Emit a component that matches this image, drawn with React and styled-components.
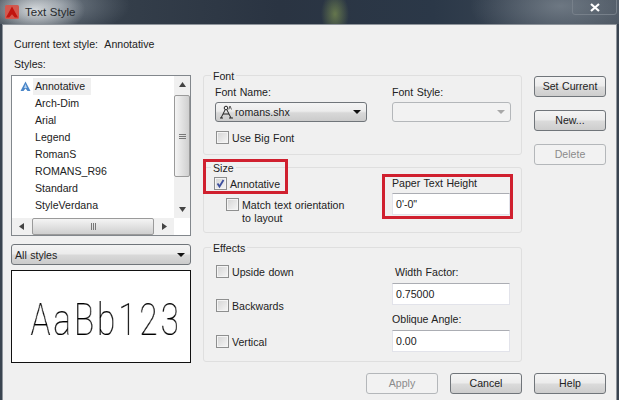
import styled, { createGlobalStyle } from 'styled-components';

const GlobalStyle = createGlobalStyle`
	html, body {
		margin: 0;
		padding: 0;
		background: #2b3644;
	}

	body {
		font-family: 'Liberation Sans', Arial, sans-serif;
		font-size: 10.6px;
		word-spacing: 0.5px;
		color: #222;
	}
`;

const Frame = styled.div`
	width: 619px;
	height: 400px;
	overflow: hidden;
	display: flex;
	flex-direction: column;
	background: #3a4450;
`;

const TitleBar = styled.div`
	flex: none;
	height: 24px;
	display: flex;
	align-items: center;
	gap: 6px;
	padding-left: 5px;
	position: relative;
	background:
		radial-gradient(ellipse 50px 26px at 35px 10px, rgba(235, 238, 240, 0.85), rgba(235, 238, 240, 0) 100%),
		radial-gradient(ellipse 70px 30px at 60px 5px, rgba(150, 160, 170, 0.6), rgba(150, 160, 170, 0) 100%),
		radial-gradient(ellipse 14px 22px at 335px 14px, rgba(120, 140, 80, 0.75), rgba(120, 140, 80, 0) 100%),
		radial-gradient(ellipse 90px 40px at 560px 6px, rgba(130, 140, 150, 0.7), rgba(130, 140, 150, 0) 100%),
		linear-gradient(90deg, #3c4650 0%, #2a3442 45%, #2b3848 70%, #46505c 100%);
`;

const Title = styled.span`
	font-size: 11.5px;
	color: #26292c;
`;

const CloseButton = styled.div`
	position: absolute;
	top: -1px;
	right: 2px;
	width: 45px;
	height: 16px;
	box-sizing: border-box;
	display: flex;
	align-items: center;
	justify-content: center;
	border: 1px solid #77808a;
	border-radius: 0 0 3px 3px;
`;

const Client = styled.div`
	flex: 1;
	position: relative;
	margin: 0 2px 0 2px;
	padding-left: 8px;
	border: 1px solid #8f959c;
	border-bottom: 0;
	background: #f0f0f0;
	display: flex;
	flex-direction: column;
`;

const Header = styled.div`
	flex: none;
	height: 50px;
	padding: 11px 0 0 3px;
	box-sizing: border-box;
	line-height: 16px;
`;

const Line = styled.div`
	height: 16px;
	margin-bottom: 4px;
	white-space: pre;
`;

const Body = styled.div`
	display: grid;
	grid-template-columns: 180px 319px 72px;
	column-gap: 12px;
	height: 288px;
`;

const Column = styled.div`
	display: flex;
	flex-direction: column;
	min-width: 0;
`;

const StyleList = styled.div`
	height: 161px;
	box-sizing: border-box;
	border: 1px solid #82878c;
	background: #fff;
	display: grid;
	grid-template-columns: 1fr 16px;
	grid-template-rows: 142px 17px;
`;

const Rows = styled.div`
	padding: 2px 0 0 8px;
`;

const Row = styled.div`
	display: flex;
	align-items: center;
	height: 17px;
`;

const RowIcon = styled.span`
	width: 13px;
	flex: none;
	display: flex;
`;

const RowText = styled.span`
	padding: 0 6px 0 2px;
	line-height: 17px;
	background: ${(p) => (p.$selected ? '#f0f0f0' : 'transparent')};
`;

const VScroll = styled.div`
	display: flex;
	flex-direction: column;
	align-items: center;
	background: #f0f0f0;
	justify-content: space-between;
	padding: 6px 0 6px;
	box-sizing: border-box;
	position: relative;
`;

const VThumb = styled.div`
	position: absolute;
	left: 0;
	top: 19px;
	width: 16px;
	height: 82px;
	box-sizing: border-box;
	border: 1px solid #9a9a9a;
	border-radius: 2px;
	background: linear-gradient(90deg, #f4f4f4, #cfcfcf);
	display: flex;
	flex-direction: column;
	align-items: center;
	justify-content: center;
	gap: 1px;
`;

const HScroll = styled.div`
	position: relative;
	display: flex;
	align-items: center;
	justify-content: space-between;
	padding: 0 7px;
	background: #f0f0f0;
`;

const HThumb = styled.div`
	position: absolute;
	left: 20px;
	top: 0;
	width: 122px;
	height: 17px;
	box-sizing: border-box;
	border: 1px solid #9a9a9a;
	border-radius: 2px;
	background: linear-gradient(#f4f4f4, #cfcfcf);
	display: flex;
	align-items: center;
	justify-content: center;
	gap: 1px;
`;

const Grip = styled.i`
	display: block;
	background: #777;
	width: ${(p) => (p.$vertical ? '1px' : '7px')};
	height: ${(p) => (p.$vertical ? '7px' : '1px')};
`;

const Select = styled.div`
	height: ${(p) => p.$height || 20}px;
	width: ${(p) => p.$width || 180}px;
	margin-top: ${(p) => p.$top || 0}px;
	box-sizing: border-box;
	border: 1px solid ${(p) => (p.$disabled ? '#b4b7ba' : '#70757a')};
	border-radius: 3px;
	background: ${(p) => (p.$disabled ? '#f2f2f2' : 'linear-gradient(#f4f4f4 0%, #ececec 45%, #d8d8d8 55%, #cbcbcb 100%)')};
	display: flex;
	align-items: center;
	gap: 1px;
	padding: 0 5px 0 3px;
`;

const SelectText = styled.span`
	flex: 1;
`;

const Caret = styled.span`
	width: 0;
	height: 0;
	border-left: 4px solid transparent;
	border-right: 4px solid transparent;
	border-top: 4px solid ${(p) => (p.$disabled ? '#a8a8a8' : '#111')};
`;

const Preview = styled.div`
	height: 93px;
	margin-top: 5px;
	box-sizing: border-box;
	border: 1px solid #111;
	background: #fff;
	display: flex;
	align-items: center;
	justify-content: center;
	overflow: hidden;
`;

const PreviewText = styled.span`
	display: inline-block;
	font-family: Roboto, 'Liberation Sans', sans-serif;
	font-weight: 100;
	font-size: 45px;
	letter-spacing: 4px;
	line-height: 1;
	color: #000;
	margin: 6px 0 0 10px;
	white-space: nowrap;
	transform: scaleX(0.74);
	will-change: transform;
	-webkit-text-stroke: 0.2px #000;
`;

const Group = styled.div`
	flex: none;
	height: ${(p) => p.$height}px;
	margin-top: ${(p) => p.$top || 0}px;
	box-sizing: border-box;
	border: 1px solid #dfdfdf;
	border-radius: 3px;
	padding: 0 10px 0 11px;
`;

const Legend = styled.div`
	margin: -8px 0 0 -4px;
	width: fit-content;
	height: 16px;
	line-height: 16px;
	padding: 0 2px;
	background: #f0f0f0;
`;

const Columns = styled.div`
	display: grid;
	grid-template-columns: ${(p) => p.$left}px 1fr;
`;

const Label = styled.div`
	height: 16px;
	line-height: 16px;
	margin-top: ${(p) => p.$top || 0}px;
	margin-left: ${(p) => p.$left || 0}px;
`;

const CheckRow = styled.div`
	display: flex;
	align-items: flex-start;
	gap: 3px;
	line-height: 13px;
	margin-top: ${(p) => p.$top || 0}px;
	margin-left: ${(p) => p.$left || 0}px;
`;

const CheckText = styled.span`
	line-height: 13px;
	padding-top: 1px;
`;

const Box = styled.span`
	flex: none;
	width: 13px;
	height: 13px;
	box-sizing: border-box;
	border: 1px solid #8e8f8f;
	background: linear-gradient(135deg, #d4d4d4, #f6f6f6);
	box-shadow: inset 0 0 0 1px #f4f4f4;
	display: flex;
	align-items: center;
	justify-content: center;
`;

const TextField = styled.div`
	height: 22px;
	width: ${(p) => p.$width || 118}px;
	margin-top: ${(p) => p.$top || 0}px;
	box-sizing: border-box;
	border: 1px solid #e2e3ea;
	border-top-color: #abadb3;
	background: #fff;
	padding-left: 3px;
	line-height: 20px;
`;

const ButtonStack = styled.div`
	display: flex;
	flex-direction: column;
	gap: 13px;
	padding-top: 1px;
`;

const Button = styled.div`
	width: 72px;
	height: 21px;
	box-sizing: border-box;
	border: 1px solid ${(p) => (p.$disabled ? '#b4b7ba' : '#70757a')};
	border-radius: 3px;
	background: ${(p) => (p.$disabled ? '#f2f2f2' : 'linear-gradient(#f4f4f4 0%, #ececec 45%, #dadada 55%, #cdcdcd 100%)')};
	color: ${(p) => (p.$disabled ? '#8b8b8b' : '#222')};
	text-align: center;
	line-height: 19px;
`;

const Footer = styled.div`
	display: flex;
	justify-content: flex-end;
	gap: 12px;
	padding: 10px 10px 0 0;
`;

const RedBox = styled.div`
	position: absolute;
	left: ${(p) => p.$x}px;
	top: ${(p) => p.$y}px;
	width: ${(p) => p.$w}px;
	height: ${(p) => p.$h}px;
	box-sizing: border-box;
	border: 3px solid #d0202f;
	pointer-events: none;
`;

const AppIcon = () => (
	<svg width='14' height='14' viewBox='0 0 14 14'>
		<rect width='14' height='14' rx='1.5' fill='#d2584e' />
		<path d='M7 1.5 L13 12.5 H9.8 L7 9.2 L4.2 12.5 H1 Z' fill='#c2140f' />
	</svg>
);

const CloseIcon = () => (
	<svg width='10' height='9' viewBox='0 0 10 9'>
		<path d='M1 1 L9 8 M9 1 L1 8' stroke='#fff' strokeWidth='2.2' />
	</svg>
);

const AnnotativeIcon = () => (
	<svg width='11' height='11' viewBox='0 0 11 11'>
		<path d='M5.5 0.5 L10.5 10 H7.5 L5.5 7.5 L3.5 10 H0.5 Z' fill='#4a86c8' />
		<path d='M5.5 3 L7 7 H4 Z' fill='#b9d3ee' />
	</svg>
);

const ShxIcon = () => (
	<svg width='15' height='15' viewBox='0 0 15 15' fill='none' stroke='#222' strokeWidth='1'>
		<circle cx='7' cy='3' r='1.8' />
		<path d='M6 5 L2 13 M8 5 L12 13 M4 9 H10 M1 13 H4 M10 13 H14' />
		<path d='M11 1 L12.5 4.5 M11 1 L9.8 4.5' strokeWidth='0.7' />
	</svg>
);

const CheckMark = () => (
	<svg width='11' height='11' viewBox='0 0 11 11'>
		<path d='M2.5 5.5 L4.5 8.5 L8.5 2' fill='none' stroke='#3d4f9e' strokeWidth='1.8' />
	</svg>
);

const Arrow = ({ d }) => (
	<svg width='7' height='5' viewBox='0 0 7 5'>
		<path d={d} fill='#444' />
	</svg>
);

const ArrowSide = ({ d }) => (
	<svg width='5' height='7' viewBox='0 0 5 7'>
		<path d={d} fill='#444' />
	</svg>
);

const styles = ['Annotative', 'Arch-Dim', 'Arial', 'Legend', 'RomanS', 'ROMANS_R96', 'Standard', 'StyleVerdana'];

const App = () => (
	<Frame>
		<GlobalStyle />
		<TitleBar>
			<AppIcon />
			<Title>Text Style</Title>
			<CloseButton><CloseIcon /></CloseButton>
		</TitleBar>
		<Client>
			<Header>
				<Line>Current text style:  Annotative</Line>
				<Line>Styles:</Line>
			</Header>
			<Body>
				<Column>
					<StyleList>
						<Rows>
							{styles.map((name, i) => (
								<Row key={name}>
									<RowIcon>{i === 0 && <AnnotativeIcon />}</RowIcon>
									<RowText $selected={i === 0}>{name}</RowText>
								</Row>
							))}
						</Rows>
						<VScroll>
							<Arrow d='M3.5 0 L7 5 H0 Z' />
							<VThumb><Grip /><Grip /><Grip /></VThumb>
							<Arrow d='M0 0 H7 L3.5 5 Z' />
						</VScroll>
						<HScroll>
							<ArrowSide d='M5 0 V7 L0 3.5 Z' />
							<HThumb><Grip $vertical /><Grip $vertical /><Grip $vertical /></HThumb>
							<ArrowSide d='M0 0 L5 3.5 L0 7 Z' />
						</HScroll>
						<div />
					</StyleList>
					<Select $height={21} $top={8}>
						<SelectText>All styles</SelectText>
						<Caret />
					</Select>
					<Preview><PreviewText>AaBb123</PreviewText></Preview>
				</Column>

				<Column>
					<Group $height={80}>
						<Legend>Font</Legend>
						<Columns $left={177}>
							<div>
								<Label>Font Name:</Label>
								<Select $width={152} $top={2}>
									<ShxIcon />
									<SelectText>romans.shx</SelectText>
									<Caret />
								</Select>
							</div>
							<div>
								<Label>Font Style:</Label>
								<Select $width={119} $top={2} $disabled>
									<SelectText />
									<Caret $disabled />
								</Select>
							</div>
						</Columns>
						<CheckRow $top={9} $left={1}><Box /><CheckText>Use Big Font</CheckText></CheckRow>
					</Group>

					<Group $height={66} $top={12}>
						<Legend>Size</Legend>
						<Columns $left={177}>
							<div>
								<CheckRow $top={1} $left={-1}><Box><CheckMark /></Box><CheckText>Annotative</CheckText></CheckRow>
								<CheckRow $top={7} $left={11}>
									<Box />
									<CheckText>Match text orientation<br />to layout</CheckText>
								</CheckRow>
							</div>
							<div>
								<Label $top={-1}>Paper Text Height</Label>
								<TextField $top={2}>0'-0"</TextField>
							</div>
						</Columns>
					</Group>

					<Group $height={115} $top={14}>
						<Legend>Effects</Legend>
						<Columns $left={177}>
							<div>
								<CheckRow $top={9} $left={1}><Box /><CheckText>Upside down</CheckText></CheckRow>
								<CheckRow $top={20} $left={1}><Box /><CheckText>Backwards</CheckText></CheckRow>
								<CheckRow $top={22} $left={1}><Box /><CheckText>Vertical</CheckText></CheckRow>
							</div>
							<div>
								<Label $top={8} $left={3}>Width Factor:</Label>
								<TextField $top={3}>0.75000</TextField>
								<Label $top={6}>Oblique Angle:</Label>
								<TextField $top={3}>0.00</TextField>
							</div>
						</Columns>
					</Group>
				</Column>

				<ButtonStack>
					<Button>Set Current</Button>
					<Button>New...</Button>
					<Button $disabled>Delete</Button>
				</ButtonStack>
			</Body>
			<Footer>
				<Button $disabled>Apply</Button>
				<Button>Cancel</Button>
				<Button>Help</Button>
			</Footer>
			<RedBox $x={200} $y={134} $w={85} $h={35} />
			<RedBox $x={379} $y={149} $w={131} $h={45} />
		</Client>
	</Frame>
);

export default App;
